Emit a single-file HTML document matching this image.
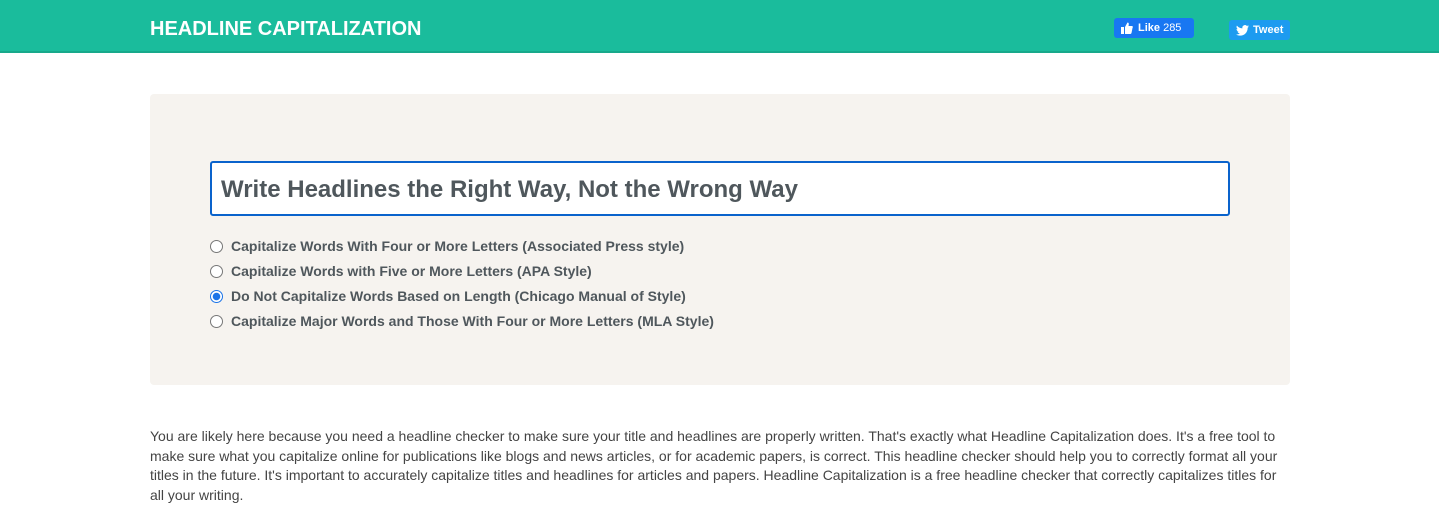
<!DOCTYPE html>
<html><head><style>
*{margin:0;padding:0;box-sizing:border-box}
body{width:1439px;height:522px;overflow:hidden;background:#fff;font-family:"Liberation Sans",Arial,sans-serif;position:relative}
.hdr{position:absolute;left:0;top:0;width:1439px;height:53px;background:#1abc9c;border-bottom:2px solid #17a98b}
.logo{position:absolute;left:150px;top:18px;color:#fff;font-weight:bold;font-size:20px}
.fb{position:absolute;left:1114px;top:18px;width:80px;height:20px;background:#1877f2;border-radius:3px;color:#fff;font-size:11px;line-height:20px;padding-left:24px}
.fb b{font-weight:bold}
.tw{position:absolute;left:1229px;top:20px;width:61px;height:20px;background:#1d9bf0;border-radius:3px;color:#fff;font-size:11px;font-weight:bold;line-height:20px;padding-left:24px}
.box{position:absolute;left:150px;top:94px;width:1140px;height:291px;background:#f6f3ef;border-radius:4px}
.inp{position:absolute;left:210px;top:161px;width:1020px;height:55px;background:#fff;border:2px solid #0a63cc;border-radius:3px;font-size:24px;font-weight:bold;color:#4f575c;line-height:53px;padding-left:9px}
.opt{position:absolute;left:210px;font-size:14px;font-weight:bold;color:#4f575c}
.opt i{display:inline-block;width:13px;height:13px;border:1px solid #777;border-radius:50%;background:#fff;vertical-align:-2px;margin-right:8px}
.opt i.on{border:1px solid #1a73e8;background:radial-gradient(circle,#1a73e8 0 3.5px,#fff 4px)}
p{position:absolute;left:150px;top:427px;width:1142px;font-size:14px;line-height:19.5px;color:#444}
</style></head><body>
<div class="hdr"><div class="logo">HEADLINE CAPITALIZATION</div>
<div class="fb"><svg style="position:absolute;left:7px;top:4px" width="12" height="12" viewBox="0 0 12 12"><rect x="0" y="5" width="3" height="7" fill="#fff"/><path d="M4 5 L6.5 0.5 C8 0.5 8 2 7.5 4 L11 4 C12 4 12 5.5 11.5 6 L10.5 11 C10 12 9.5 12 9 12 L4 12Z" fill="#fff"/></svg><b>Like</b> 285</div>
<div class="tw"><svg style="position:absolute;left:7px;top:5px" width="13" height="11" viewBox="0 0 24 20"><path d="M24 2.4a10 10 0 0 1-2.8.8A5 5 0 0 0 23.3.4a10 10 0 0 1-3.1 1.2A4.9 4.9 0 0 0 11.8 6 14 14 0 0 1 1.7.9a4.9 4.9 0 0 0 1.5 6.6A4.900 4.9 0 0 1 1 6.9a4.9 4.9 0 0 0 3.9 4.8 5 5 0 0 1-2.2.1 4.900 4.9 0 0 0 4.600 3.4A9.900 9.9 0 0 1 0 17.300 14 14 0 0 0 7.500 19.500c9.100 0 14-7.500 14-14v-.6A10 10 0 0 0 24 2.400z" fill="#fff"/></svg>Tweet</div>
</div>
<div class="box"></div>
<div class="inp">Write Headlines the Right Way, Not the Wrong Way</div>
<div class="opt" style="top:238px"><i></i>Capitalize Words With Four or More Letters (Associated Press style)</div>
<div class="opt" style="top:263px"><i></i>Capitalize Words with Five or More Letters (APA Style)</div>
<div class="opt" style="top:288px"><i class="on"></i>Do Not Capitalize Words Based on Length (Chicago Manual of Style)</div>
<div class="opt" style="top:313px"><i></i>Capitalize Major Words and Those With Four or More Letters (MLA Style)</div>
<p>You are likely here because you need a headline checker to make sure your title and headlines are properly written. That's exactly what Headline Capitalization does. It's a free tool to make sure what you capitalize online for publications like blogs and news articles, or for academic papers, is correct. This headline checker should help you to correctly format all your titles in the future. It's important to accurately capitalize titles and headlines for articles and papers. Headline Capitalization is a free headline checker that correctly capitalizes titles for all your writing.</p>
</body></html>
